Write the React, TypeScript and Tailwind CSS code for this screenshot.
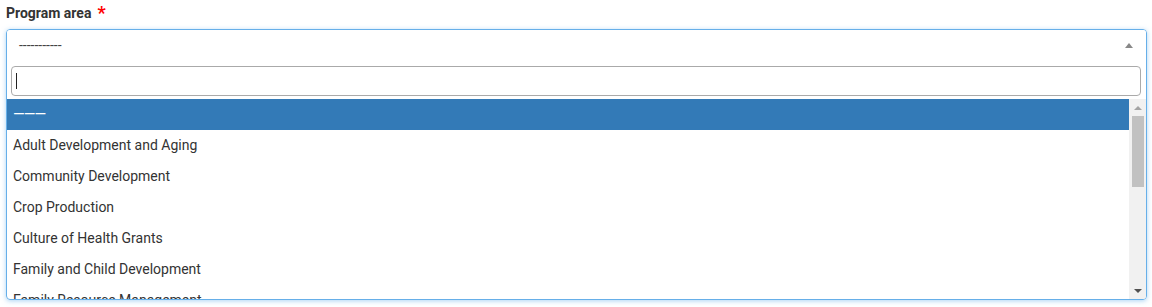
const OPTIONS = [
  'Adult Development and Aging',
  'Community Development',
  'Crop Production',
  'Culture of Health Grants',
  'Family and Child Development',
  'Family Resource Management',
  'Food Safety',
  'Nutrition',
];

const App = (): JSX.Element => {
  return (
    <div className="h-[307px] w-[1152px] overflow-hidden bg-white px-[6px] pt-[3px] font-['Roboto',sans-serif]">
      <label className="flex h-[20px] items-center text-[14px] font-bold text-[#333]">
        Program area
        <span className="ml-[6px] text-[18px] leading-none text-[#ff0000]">*</span>
      </label>

      <div className="mt-[6px] h-[271px] w-[1141px] overflow-hidden rounded-[4px] border border-[#66afe9] shadow-[0_1px_5px_rgba(102,175,233,0.55)]">
        {/* selection */}
        <div className="flex h-[30px] items-center justify-between bg-white pl-[12px] pr-[13px]">
          <span className="text-[14px] text-[#444]">-----------</span>
          <svg width="8" height="5" viewBox="0 0 8 5">
            <path d="M0 5 L4 0 L8 5 Z" fill="#888" />
          </svg>
        </div>

        {/* search */}
        <div className="bg-white pb-[3px] pl-[4px] pr-[5px] pt-[6px]">
          <div className="flex h-[30px] items-center rounded-[4px] border border-[#aaa] px-[4px]">
            <span className="h-[16px] w-px bg-[#222]" />
          </div>
        </div>

        {/* results */}
        <div className="flex h-[200px]">
          <ul className="flex-1 overflow-hidden text-[14px] text-[#333]">
            <li className="flex h-[31px] items-center bg-[#337ab7] px-[6px] text-[15px] tracking-[-1px] text-white">
              ———
            </li>
            {OPTIONS.map((o) => (
              <li key={o} className="flex h-[31px] items-center px-[6px]">
                {o}
              </li>
            ))}
          </ul>
          <div className="flex w-[17px] flex-col items-center bg-[#f1f1f1]">
            <div className="flex h-[17px] items-center justify-center">
              <svg width="8" height="4" viewBox="0 0 8 4">
                <path d="M0 4 L4 0 L8 4 Z" fill="#a3a3a3" />
              </svg>
            </div>
            <div className="h-[71px] w-[12px] bg-[#c1c1c1]" />
            <div className="flex-1" />
            <div className="flex h-[17px] items-center justify-center">
              <svg width="8" height="4" viewBox="0 0 8 4">
                <path d="M0 0 L4 4 L8 0 Z" fill="#505050" />
              </svg>
            </div>
          </div>
        </div>
      </div>
    </div>
  );
};

export default App;
